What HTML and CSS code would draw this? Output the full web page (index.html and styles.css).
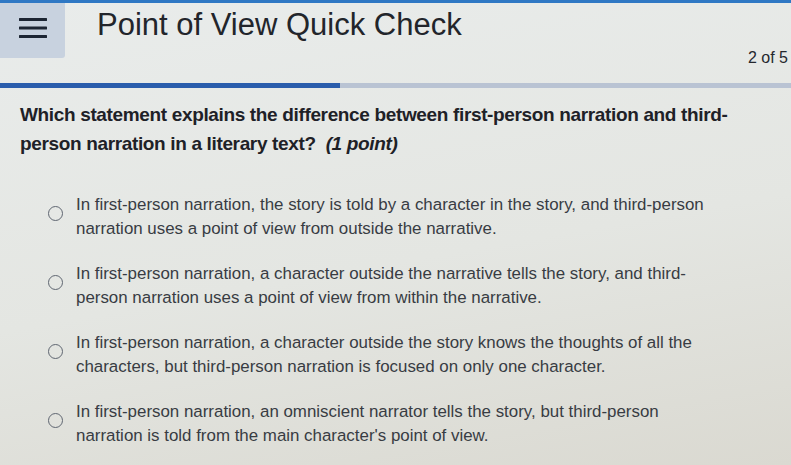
FILE: index.html
```html
<!DOCTYPE html>
<html lang="en">
<head>
<meta charset="utf-8">
<title>Point of View Quick Check</title>
<link rel="stylesheet" href="styles.css">
</head>
<body>
<header class="topbar">
  <div class="head-row">
    <button class="menu-btn" aria-label="Menu">
      <svg width="28" height="22" viewBox="0 0 28 22"><path d="M1 2.5H27M1 11H27M1 19.5H27" stroke="#1c2533" stroke-width="3" stroke-linecap="round"/></svg>
    </button>
    <h1 class="title">Point of View Quick Check</h1>
    <div class="counter">2 of 5</div>
  </div>
  <div class="progress"><div class="progress-fill" style="width:43%"></div></div>
</header>
<main class="question">
  <p class="prompt">Which statement explains the difference between first-person narration and third-<br>person narration in a literary text? <em class="points">(1 point)</em></p>
  <ul class="options">
    <li class="option"><span class="radio"></span><span class="option-text">In first-person narration, the story is told by a character in the story, and third-person<br>narration uses a point of view from outside the narrative.</span></li>
    <li class="option"><span class="radio"></span><span class="option-text">In first-person narration, a character outside the narrative tells the story, and third-<br>person narration uses a point of view from within the narrative.</span></li>
    <li class="option"><span class="radio"></span><span class="option-text">In first-person narration, a character outside the story knows the thoughts of all the<br>characters, but third-person narration is focused on only one character.</span></li>
    <li class="option"><span class="radio"></span><span class="option-text">In first-person narration, an omniscient narrator tells the story, but third-person<br>narration is told from the main character's point of view.</span></li>
  </ul>
</main>
</body>
</html>
```
FILE: styles.css
```css
* { box-sizing: border-box; }
html, body { height: 100%; }
body {
  margin: 0;
  font-family: "Liberation Sans", Arial, sans-serif;
  background: linear-gradient(170deg, #e9eceb 0%, #e4e6e2 55%, #dad9d1 100%);
  color: #1f2228;
  overflow: hidden;
}
.topbar {
  border-top: 3px solid #2f78c4;
}
.head-row {
  display: flex;
  align-items: flex-start;
  height: 68px;
  padding-right: 3px;
}
.menu-btn {
  width: 65px;
  height: 55px;
  border: none;
  border-radius: 0 0 3px 0;
  background: #c8d2df;
  display: flex;
  align-items: center;
  justify-content: center;
  padding: 0 0 6px 0;
  margin: 0;
}
.title {
  flex: 1;
  margin: 4px 0 0 32px;
  font-size: 31px;
  font-weight: 400;
  color: #22252b;
  line-height: normal;
}
.counter {
  align-self: flex-end;
  font-size: 16px;
  line-height: 18px;
  color: #25282e;
  margin-bottom: 4px;
}
.progress {
  margin-top: 12px;
  height: 5px;
  background: #b9c3d3;
}
.progress-fill {
  height: 100%;
  background: #2a5dac;
}
.question {
  padding: 12px 0 0 20px;
}
.prompt {
  margin: 0;
  font-size: 19px;
  font-weight: 700;
  line-height: 29px;
  letter-spacing: -0.35px;
  color: #1e2127;
}
.points {
  font-style: italic;
  margin-left: 5px;
}
.options {
  list-style: none;
  margin: 35px 0 0 0;
  padding: 0 0 0 28px;
  display: flex;
  flex-direction: column;
  gap: 21px;
}
.option {
  display: flex;
  align-items: flex-start;
  gap: 13px;
}
.radio {
  flex: none;
  width: 15px;
  height: 15px;
  margin-top: 13px;
  border: 1.5px solid #5f6671;
  border-radius: 50%;
}
.option-text {
  font-size: 16.9px;
  line-height: 24px;
  color: #383c43;
}
```
